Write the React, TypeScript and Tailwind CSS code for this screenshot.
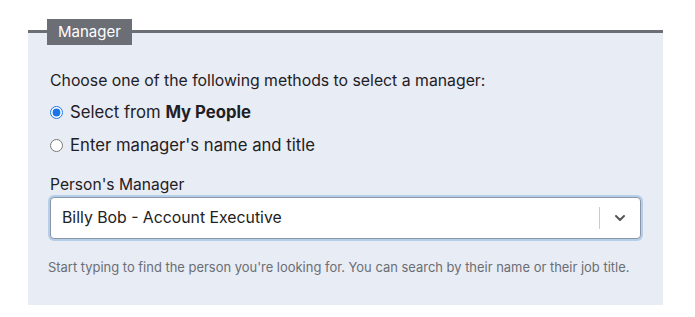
export default function App() {
  return (
    <div className="w-[695px] h-[317px] bg-white pt-[19px] pl-[28px] font-['Inter',sans-serif]">
      <div className="relative w-[635px] pt-[11px]">
        <div className="border-t-[3px] border-[#6c6e76] bg-[#e8ecf4] h-[275px] px-[22px] pt-[38px]">
          <p className="text-[15.8px] text-[#1f2024] leading-[20px]">
            Choose one of the following methods to select a manager:
          </p>
          <label className="flex items-center gap-[7px] mt-[10px] text-[16.7px] text-[#1f2024] leading-[22px]">
            <input type="radio" name="m" defaultChecked className="w-[13px] h-[13px] m-0 accent-[#1a73e8]" />
            <span>
              Select from <b className="font-bold">My People</b>
            </span>
          </label>
          <label className="flex items-center gap-[7px] mt-[11px] text-[16.7px] text-[#1f2024] leading-[22px]">
            <input type="radio" name="m" className="w-[13px] h-[13px] m-0" />
            <span>Enter manager's name and title</span>
          </label>
          <div className="mt-[19px] text-[15.6px] text-[#1f2024] leading-[20px]">Person's Manager</div>
          <div className="mt-[2px] flex items-center h-[42px] w-[591px] bg-white rounded-[4px] border border-[#8a96a6] shadow-[0_0_0_2px_rgba(120,170,220,0.45)]">
            <div className="flex-1 pl-[11px] text-[15.8px] text-[#222]">Billy Bob - Account Executive</div>
            <div className="w-px h-[22px] bg-[#ccc]" />
            <div className="w-[40px] flex justify-center">
              <svg width="14" height="14" viewBox="0 0 14 14" fill="none">
                <path d="M3 5l4 4 4-4" stroke="#555" strokeWidth="2" strokeLinecap="round" strokeLinejoin="round" />
              </svg>
            </div>
          </div>
          <p className="mt-[19px] ml-[-2px] text-[12.95px] text-[#6b6e75]">
            Start typing to find the person you're looking for. You can search by their name or their job title.
          </p>
        </div>
        <div className="absolute left-[19px] top-0 h-[26px] px-[11px] bg-[#6c6e76] text-white text-[15px] leading-[26px]">
          Manager
        </div>
      </div>
    </div>
  );
}
